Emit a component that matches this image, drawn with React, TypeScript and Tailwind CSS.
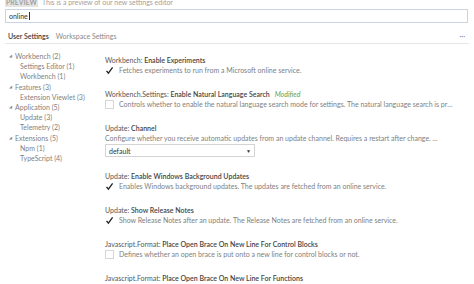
import React from "react";

type TreeItem = { label: string; level: 0 | 1 };

const tree: TreeItem[] = [
  { label: "Workbench (2)", level: 0 },
  { label: "Settings Editor (1)", level: 1 },
  { label: "Workbench (1)", level: 1 },
  { label: "Features (3)", level: 0 },
  { label: "Extension Viewlet (3)", level: 1 },
  { label: "Application (5)", level: 0 },
  { label: "Update (3)", level: 1 },
  { label: "Telemetry (2)", level: 1 },
  { label: "Extensions (5)", level: 0 },
  { label: "Npm (1)", level: 1 },
  { label: "TypeScript (4)", level: 1 },
];

const Check = ({ checked }: { checked: boolean }) =>
  checked ? (
    <svg width="9" height="9" viewBox="0 0 9 9" className="shrink-0">
      <path d="M1.5 4.8 L3.4 7.2 L7.6 1.4" fill="none" stroke="#222" strokeWidth="1.3" />
    </svg>
  ) : (
    <span className="h-[9px] w-[9px] shrink-0 border border-[#d6d6d6] bg-white" />
  );

const Setting = ({
  prefix,
  name,
  desc,
  checked,
  modified,
}: {
  prefix: string;
  name: string;
  desc?: string;
  checked?: boolean;
  modified?: boolean;
}) => (
  <div className="flex flex-col">
    <div className="flex h-[10px] items-center gap-[5px] whitespace-nowrap">
      <span className="text-[#555]">
        {prefix}: <span className="font-semibold text-[#444]">{name}</span>
      </span>
      {modified && <span className="italic text-[#66a14a]">Modified</span>}
    </div>
    {desc !== undefined && (
      <div className="flex h-[10px] items-center gap-[5px]">
        {checked !== undefined && <Check checked={checked} />}
        <span className="w-[336px] truncate text-[#808080]">{desc}</span>
      </div>
    )}
  </div>
);

export default function App() {
  return (
    <div
      className="h-[284px] w-[474px] overflow-hidden bg-white text-[7px] leading-[10px]"
      style={{ fontFamily: 'Lato, "Open Sans", sans-serif' }}
    >
      {/* Preview banner */}
      <div className="-mt-[3px] flex h-[10px] items-center gap-[4px] px-[5px]">
        <span className="bg-[#e4e4e4] px-[1px] font-semibold text-[#9a9a9a]">PREVIEW</span>
        <span className="text-[#a0a0a0]">This is a preview of our new settings editor</span>
      </div>

      {/* Search */}
      <div className="mx-[5px] mt-[2px] flex h-[14px] w-[463px] items-center border border-[#c9d4e2] px-[3px] text-[#333]">
        online<span className="ml-[1px] h-[8px] w-px bg-[#333]" />
      </div>

      {/* Tabs */}
      <div className="mx-[5px] mt-[6px] flex h-[15px] items-center gap-[7px] border-b border-[#e6e6e6] px-[3px]">
        <span className="font-semibold text-[#3c3c3c]">User Settings</span>
        <span className="text-[#8a8a8a]">Workspace Settings</span>
        <span className="ml-auto pr-[1px] text-[#777]">···</span>
      </div>

      <div className="mt-[7px] flex">
        {/* Tree */}
        <div className="flex w-[105px] shrink-0 flex-col pl-[9px] text-[#7f7f7f]">
          {tree.map((t, i) => (
            <div key={i} className="flex h-[10.2px] items-center whitespace-nowrap">
              {t.level === 0 ? (
                <span className="mr-[3px] text-[4px] text-[#888]">◢</span>
              ) : (
                <span className="w-[11px]" />
              )}
              {t.label}
            </div>
          ))}
        </div>

        {/* Settings */}
        <div className="mt-[4px] flex flex-col gap-[14px]">
          <Setting
            prefix="Workbench"
            name="Enable Experiments"
            checked
            desc="Fetches experiments to run from a Microsoft online service."
          />
          <Setting
            prefix="Workbench.Settings"
            name="Enable Natural Language Search"
            modified
            checked={false}
            desc="Controls whether to enable the natural language search mode for settings. The natural language search is provided by an online service."
          />
          <div className="flex flex-col">
            <Setting
              prefix="Update"
              name="Channel"
              desc="Configure whether you receive automatic updates from an update channel. Requires a restart after change. The updates are fetched from an online service."
            />
            <div className="mt-[1px] flex h-[13px] w-[150px] items-center justify-between border border-[#d4d4d4] px-[3px] text-[#333]">
              default
              <span className="text-[5px] text-[#333]">▼</span>
            </div>
          </div>
          <Setting
            prefix="Update"
            name="Enable Windows Background Updates"
            checked
            desc="Enables Windows background updates. The updates are fetched from an online service."
          />
          <Setting
            prefix="Update"
            name="Show Release Notes"
            checked
            desc="Show Release Notes after an update. The Release Notes are fetched from an online service."
          />
          <Setting
            prefix="Javascript.Format"
            name="Place Open Brace On New Line For Control Blocks"
            checked={false}
            desc="Defines whether an open brace is put onto a new line for control blocks or not."
          />
          <Setting
            prefix="Javascript.Format"
            name="Place Open Brace On New Line For Functions"
            checked={false}
            desc="Defines whether an open brace is put onto a new line for functions or not."
          />
        </div>
      </div>
    </div>
  );
}
